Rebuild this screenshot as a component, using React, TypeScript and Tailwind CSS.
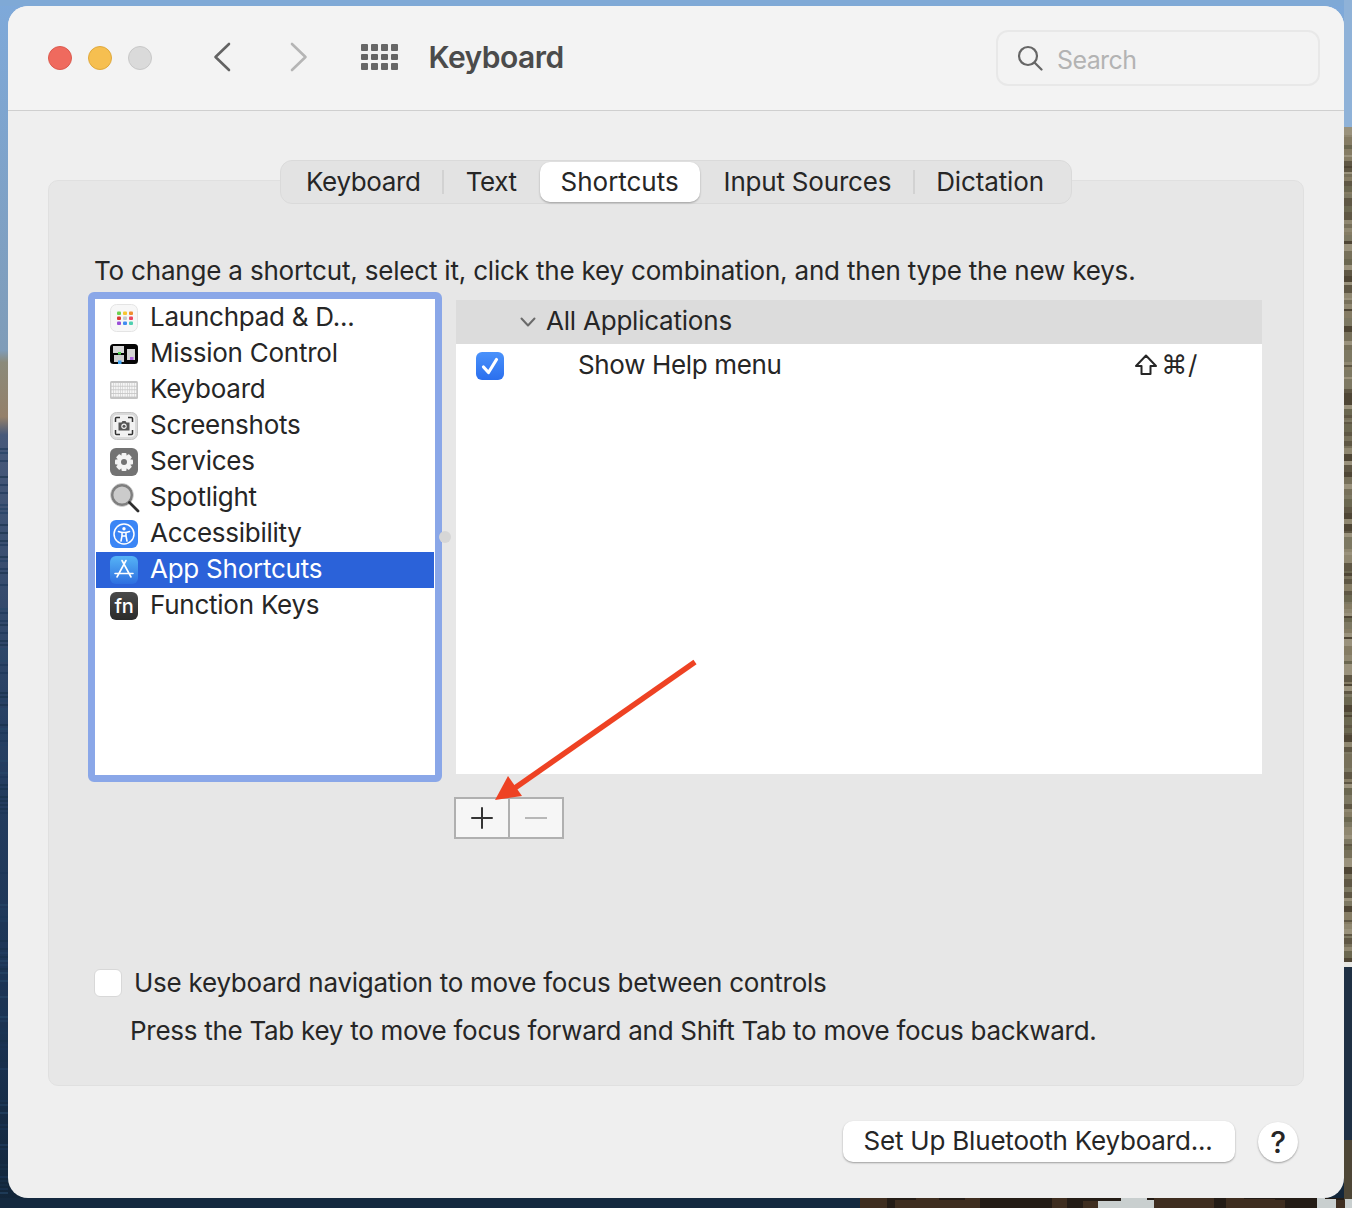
import React from 'react';

const font = '[font-family:Inter,"Noto_Sans",sans-serif]';

// simple seeded noise so the wallpaper streaks stay the same on every render
const noise = (seed: number) => {
  let s = seed;
  return () => {
    s = (s * 9301 + 49297) % 233280;
    return s / 233280;
  };
};

const rockColors = ['#7d7862', '#857c64', '#5f5744', '#8f8770', '#6b6750', '#4f4635', '#77705a', '#9a927c'];
const seaColors = ['#1b3557', '#213f63', '#173049', '#264769'];

const Wallpaper = () => {
  const rand = noise(17);
  const streaks: React.ReactNode[] = [];
  let y = 127;
  while (y < 960) {
    const h = 2 + Math.floor(rand() * 7);
    streaks.push(<rect key={`r${y}`} x="1344" y={y} width="8" height={h} fill={rockColors[Math.floor(rand() * rockColors.length)]} />);
    y += h;
  }
  for (let sy = 440; sy < 1208; sy += 4) {
    if (rand() > 0.55) {
      streaks.push(<rect key={`s${sy}`} x="0" y={sy} width="8" height="2" fill={seaColors[Math.floor(rand() * seaColors.length)]} opacity="0.6" />);
    }
  }
  let x = 860;
  while (x < 1352) {
    const w = 6 + Math.floor(rand() * 26);
    const pick = rand();
    streaks.push(<rect key={`b${x}`} x={x} y={1198 + Math.floor(rand() * 4)} width={w} height="10" fill={pick > 0.82 ? '#c9cfcf' : pick > 0.4 ? '#3f2e20' : '#241c16'} />);
    x += w;
  }
  return (
    <svg viewBox="0 0 1352 1208" className="absolute inset-0 w-[1352px] h-[1208px]">
      <defs>
        <linearGradient id="left-side" x1="0" y1="0" x2="0" y2="1">
          <stop offset="0" stopColor="#7ea9da" />
          <stop offset="0.29" stopColor="#7f9cb8" />
          <stop offset="0.3" stopColor="#8b8a7a" />
          <stop offset="0.345" stopColor="#94806a" />
          <stop offset="0.36" stopColor="#47597a" />
          <stop offset="0.6" stopColor="#263f62" />
          <stop offset="0.85" stopColor="#1b3353" />
          <stop offset="1" stopColor="#122538" />
        </linearGradient>
      </defs>
      <rect width="1352" height="1208" fill="url(#left-side)" />
      <rect width="860" height="10" y="1198" fill="#14293f" />
      <rect x="860" width="492" height="10" y="1198" fill="#241c16" />
      <rect width="1352" height="6" fill="#7fa9d6" />
      <rect x="1344" width="8" height="127" fill="#8fb2d8" />
      <rect x="1344" y="960" width="8" height="7" fill="#e6e6e2" />
      <rect x="1344" y="967" width="8" height="173" fill="#1f3044" />
      <rect x="1344" y="1140" width="8" height="68" fill="#4d4636" />
      {streaks}
    </svg>
  );
};

const TrafficLight = ({ color, border }: { color: string; border: string }) => (
  <span className={`block w-[24px] h-[24px] rounded-full border ${color} ${border}`} />
);

const LaunchpadIcon = () => (
  <svg viewBox="0 0 28 28" className="w-[28px] h-[28px]">
    <rect x="0.5" y="0.5" width="27" height="27" rx="6" fill="#f7f7f7" stroke="#e4e4e4" />
    {[
      ['#6cd04f', '#f7c52f', '#f08c2e'],
      ['#d9372f', '#c4c8cc', '#ea4560'],
      ['#9a4fd8', '#3f8cf0', '#4fd0b0'],
    ].map((row, y) =>
      row.map((c, x) => <rect key={`${x}-${y}`} x={7 + x * 6} y={7.5 + y * 5} width="4" height="3.6" rx="1" fill={c} />),
    )}
  </svg>
);

const MissionIcon = () => (
  <svg viewBox="0 0 28 20" className="w-[28px] h-[20px]">
    <rect width="28" height="20" rx="3.5" fill="#050505" />
    <rect x="3" y="2" width="11" height="7" fill="#d8d8d8" />
    <rect x="8" y="8" width="3" height="2.5" fill="#4fd04a" />
    <rect x="4" y="11" width="10" height="7" fill="#d0d0d0" />
    <rect x="8" y="16.5" width="3.5" height="3.5" fill="#3ea2f0" />
    <rect x="17" y="5" width="8" height="11" fill="#d4d4d4" />
    <rect x="20" y="13" width="3.5" height="3" fill="#a760dc" />
  </svg>
);

const KeyboardIcon = () => (
  <svg viewBox="0 0 28 18" className="w-[28px] h-[18px]">
    <rect width="28" height="18" rx="1.5" fill="#c4c4c4" />
    {[0, 1, 2, 3].map((y) =>
      Array.from({ length: 11 }).map((_, x) => (
        <rect key={`${x}-${y}`} x={1.5 + x * 2.3} y={2 + y * 3.6} width="1.8" height="2.8" fill="#f6f6f6" />
      )),
    )}
  </svg>
);

const ScreenshotIcon = () => (
  <svg viewBox="0 0 28 28" className="w-[28px] h-[28px]">
    <rect x="0.5" y="0.5" width="27" height="27" rx="6" fill="#d9d9d9" stroke="#c4c4c4" />
    <rect x="3" y="3" width="22" height="22" rx="4" fill="#f2f2f2" />
    <path d="M5.5 10V6.5a1 1 0 0 1 1-1H10M18 5.5h3.5a1 1 0 0 1 1 1V10M22.5 18v3.5a1 1 0 0 1-1 1H18M10 22.5H6.5a1 1 0 0 1-1-1V18" fill="none" stroke="#333" strokeWidth="1.5" />
    <path d="M8.5 10.5h3l1-1.5h3l1 1.5h3v8h-11Z" fill="#555" />
    <circle cx="14" cy="14.3" r="2.7" fill="#eee" />
    <circle cx="14" cy="14.3" r="1.5" fill="#555" />
  </svg>
);

const ServicesIcon = () => (
  <svg viewBox="0 0 28 28" className="w-[28px] h-[28px]">
    <rect width="28" height="28" rx="6" fill="#737373" />
    <g fill="#f4f4f4">
      {[0, 45, 90, 135].map((a) => (
        <rect key={a} x="11.5" y="5" width="5" height="18" rx="1" transform={`rotate(${a} 14 14)`} />
      ))}
      <circle cx="14" cy="14" r="7" />
    </g>
    <circle cx="14" cy="14" r="3" fill="#737373" />
  </svg>
);

const SpotlightIcon = () => (
  <svg viewBox="0 0 30 30" className="w-[30px] h-[30px]">
    <circle cx="12" cy="12" r="10" fill="#cbcbcb" stroke="#7f7f7f" strokeWidth="2.8" />
    <circle cx="12" cy="12" r="11.5" fill="none" stroke="#d4d4d4" strokeWidth="0.8" />
    <path d="M19.5 19.5 28 28" stroke="#2e2e2e" strokeWidth="2.8" strokeLinecap="round" />
  </svg>
);

const AccessibilityIcon = () => (
  <svg viewBox="0 0 28 28" className="w-[28px] h-[28px]">
    <rect width="28" height="28" rx="6" fill="#3a85f5" />
    <circle cx="14" cy="14" r="10" fill="none" stroke="#fff" strokeWidth="1.5" />
    <circle cx="14" cy="8.8" r="1.7" fill="#fff" />
    <path d="M8.5 11.5 12 12.5V16L11 21M19.5 11.5 16 12.5V16L17 21M12 12.5h4M12 16h4" fill="none" stroke="#fff" strokeWidth="1.6" strokeLinecap="round" />
  </svg>
);

const AppStoreIcon = () => (
  <svg viewBox="0 0 28 28" className="w-[28px] h-[28px]">
    <defs>
      <linearGradient id="store" x1="0" y1="0" x2="0" y2="1">
        <stop offset="0" stopColor="#56b4f6" />
        <stop offset="1" stopColor="#2e6fe0" />
      </linearGradient>
    </defs>
    <rect width="28" height="28" rx="6" fill="url(#store)" />
    <path d="M16 4.5 7 21M12 4.5 21 21M5 17.5h18" fill="none" stroke="#fff" strokeWidth="1.6" strokeLinecap="round" />
  </svg>
);

const FnIcon = () => (
  <span className="flex items-center justify-center w-[28px] h-[28px] rounded-[6px] bg-gradient-to-b from-[#4a4a4a] to-[#2a2a2a] text-white text-[20px] font-medium leading-none">
    fn
  </span>
);

const categories: { label: string; icon: React.ReactNode; selected?: boolean }[] = [
  { label: 'Launchpad & D...', icon: <LaunchpadIcon /> },
  { label: 'Mission Control', icon: <MissionIcon /> },
  { label: 'Keyboard', icon: <KeyboardIcon /> },
  { label: 'Screenshots', icon: <ScreenshotIcon /> },
  { label: 'Services', icon: <ServicesIcon /> },
  { label: 'Spotlight', icon: <SpotlightIcon /> },
  { label: 'Accessibility', icon: <AccessibilityIcon /> },
  { label: 'App Shortcuts', icon: <AppStoreIcon />, selected: true },
  { label: 'Function Keys', icon: <FnIcon /> },
];

const Divider = ({ className }: { className: string }) => <span className={`block w-[2px] h-[24px] bg-[#d2d2d2] ${className}`} />;

export default function App() {
  return (
    <div className={`relative w-[1352px] h-[1208px] overflow-hidden pt-[6px] pl-[8px] text-[26px] leading-[36px] text-[#262626] tracking-[-0.25px] ${font}`}>
      <Wallpaper />

      <div className="relative w-[1336px] h-[1192px] rounded-[20px] overflow-hidden bg-[#efefef] flex flex-col">
        {/* title bar */}
        <div className="h-[105px] shrink-0 bg-[#f3f3f3] border-b border-[#cfcfcf] flex items-center pl-[40px] pr-[24px] pb-[2px]">
          <div className="flex gap-[16px] mt-[2px]">
            <TrafficLight color="bg-[#ef6a5e]" border="border-[#dc5a4e]" />
            <TrafficLight color="bg-[#f6bf50]" border="border-[#e0a93c]" />
            <TrafficLight color="bg-[#dadada]" border="border-[#c8c8c8]" />
          </div>
          <svg viewBox="0 0 20 32" className="ml-[60px] w-[20px] h-[32px] fill-none stroke-[#636363]" strokeWidth="2.6" strokeLinecap="round" strokeLinejoin="round">
            <path d="M17 3 3.5 16 17 29" />
          </svg>
          <svg viewBox="0 0 20 32" className="ml-[57px] w-[20px] h-[32px] fill-none stroke-[#b5b5b5]" strokeWidth="2.6" strokeLinecap="round" strokeLinejoin="round">
            <path d="M3 3 16.5 16 3 29" />
          </svg>
          <div className="ml-[52px] grid grid-cols-4 gap-x-[3.5px] gap-y-[3px]">
            {Array.from({ length: 12 }).map((_, i) => (
              <span key={i} className="block w-[6.5px] h-[6.5px] rounded-[1px] bg-[#666666]" />
            ))}
          </div>
          <span className="ml-[31px] text-[30px] font-semibold text-[#4b4b4b] tracking-[-0.5px]">Keyboard</span>
          <div className="ml-auto w-[324px] h-[56px] rounded-[12px] border-2 border-[#e8e8e8] flex items-center pl-[19px] mt-[2px]">
            <svg viewBox="0 0 26 26" className="w-[26px] h-[26px] fill-none stroke-[#666666]" strokeWidth="2.2" strokeLinecap="round">
              <circle cx="11" cy="11" r="9" />
              <path d="m17.5 17.5 7 7" />
            </svg>
            <span className="ml-[14px] pt-[3px] text-[25px] tracking-[-0.6px] text-[#b3b3b3]">Search</span>
          </div>
        </div>

        {/* panel */}
        <div className="flex-1 flex flex-col px-[40px] pt-[69px]">
          <div className="h-[906px] rounded-[10px] border border-[#e0e0e0] bg-[#e7e7e7] flex flex-col">
            <div className="-mt-[21px] self-center flex items-center h-[44px] w-[792px] rounded-[12px] border border-[#dadada] bg-[#e3e3e3]">
              <span className="ml-[25px] tracking-[-0.35px]">Keyboard</span>
              <Divider className="ml-[21px]" />
              <span className="ml-[22px] tracking-[-0.4px]">Text</span>
              <span className="ml-[23px] w-[160px] h-[40px] rounded-[10px] bg-white shadow-[0_1px_2px_rgba(0,0,0,0.3)] flex items-center justify-center tracking-[-0.02px]">Shortcuts</span>
              <span className="ml-[24px] tracking-[-0.2px]">Input Sources</span>
              <Divider className="ml-[22px]" />
              <span className="ml-[21px] tracking-[-0.13px]">Dictation</span>
            </div>

            <p className="mt-[49px] ml-[45px] h-[36px] tracking-[-0.19px]">To change a shortcut, select it, click the key combination, and then type the new keys.</p>

            <div className="relative mt-[3px] ml-[39px] flex items-start">
              <div className="w-[354px] h-[490px] rounded-[6px] border-[7px] border-[#8aa7e8] bg-white pt-px px-px overflow-hidden">
                {categories.map((c) => (
                  <div key={c.label} className={`flex items-center h-[36px] ${c.selected ? 'bg-[#2b62d9] text-white' : ''}`}>
                    <span className="w-[54px] pl-[14px] shrink-0 flex items-center">{c.icon}</span>
                    <span className="pb-[2px]">{c.label}</span>
                  </div>
                ))}
              </div>
              <span className="absolute left-[351px] top-[239px] block w-[12px] h-[12px] rounded-full bg-[#d6d6d6]" />

              <div className="ml-[14px] mt-[8px]">
                <div className="w-[806px] h-[474px] bg-white">
                  <div className="flex items-center h-[44px] bg-[#dcdcdc] pl-[64px]">
                    <svg viewBox="0 0 16 10" className="w-[16px] h-[10px] fill-none stroke-[#6a6a6a]" strokeWidth="2" strokeLinecap="round" strokeLinejoin="round">
                      <path d="M1.5 1.5 8 8.5l6.5-7" />
                    </svg>
                    <span className="ml-[10px] pb-[2px] tracking-[-0.22px]">All Applications</span>
                  </div>
                  <div className="flex items-center h-[44px] pl-[20px] pr-[66px]">
                    <span className="flex items-center justify-center w-[28px] h-[28px] rounded-[6px] bg-[linear-gradient(180deg,#4a92fb,#2b6fee)]">
                      <svg viewBox="0 0 20 20" className="w-[20px] h-[20px] fill-none stroke-white" strokeWidth="3.2" strokeLinecap="round" strokeLinejoin="round">
                        <path d="m3.5 11 5 5.5 8-13" />
                      </svg>
                    </span>
                    <span className="ml-[74px] pb-[2px] tracking-[-0.35px]">Show Help menu</span>
                    <span className="ml-auto flex items-center pb-[2px]">
                      <svg viewBox="0 0 24 24" className="w-[24px] h-[24px] fill-none stroke-[#262626]" strokeWidth="2" strokeLinejoin="round">
                        <path d="M12 2.5 22 13h-5.5v8h-9v-8H2Z" />
                      </svg>
                      <span className="ml-[3px] font-['DejaVu_Sans']">⌘</span>
                      <span className="ml-[1px] -mr-[1px]">/</span>
                    </span>
                  </div>
                </div>
                <div className="mt-[23px] -ml-[2px] flex w-[110px] h-[42px] border-2 border-[#b0b0b0] bg-[#f6f6f6]">
                  <span className="w-[54px] border-r-2 border-[#b0b0b0] flex items-center justify-center">
                    <svg viewBox="0 0 22 22" className="w-[22px] h-[22px] stroke-[#333333]" strokeWidth="2" strokeLinecap="round">
                      <path d="M11 1v20M1 11h20" />
                    </svg>
                  </span>
                  <span className="flex-1 flex items-center justify-center">
                    <span className="block w-[22px] h-[2px] bg-[#b8b8b8]" />
                  </span>
                </div>
              </div>
            </div>

            <div className="mt-[130px] ml-[45px] flex items-center h-[28px]">
              <span className="block w-[28px] h-[28px] rounded-[6px] bg-white border border-[#d8d8d8]" />
              <span className="ml-[12px]">Use keyboard navigation to move focus between controls</span>
            </div>
            <p className="mt-[16px] ml-[81px] tracking-[-0.28px]">Press the Tab key to move focus forward and Shift Tab to move focus backward.</p>
          </div>

          <div className="mt-[35px] flex justify-end items-center pr-[6px]">
            <button className="w-[392px] h-[41px] rounded-[10px] bg-white shadow-[0_1px_2px_rgba(0,0,0,0.35)] flex items-center justify-center pb-[2px] pr-[2px] tracking-[-0.2px]">Set Up Bluetooth Keyboard...</button>
            <button className="ml-[23px] w-[40px] h-[40px] rounded-full bg-white shadow-[0_1px_2px_rgba(0,0,0,0.35)] flex items-center justify-center text-[30px] font-medium">?</button>
          </div>
        </div>
      </div>

      {/* red annotation arrow */}
      <svg viewBox="0 0 1352 1208" className="absolute inset-0 w-[1352px] h-[1208px] pointer-events-none">
        <path d="M695 662 512 790" stroke="#ee4223" strokeWidth="5.5" fill="none" />
        <path d="M495 800 508 776 522 796Z" fill="#ee4223" />
      </svg>
    </div>
  );
}
